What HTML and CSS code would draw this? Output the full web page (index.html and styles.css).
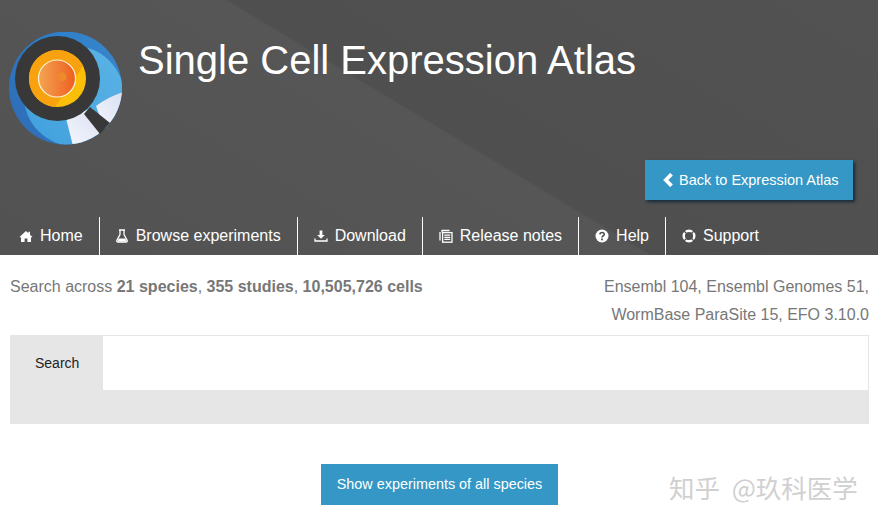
FILE: index.html
```html
<!DOCTYPE html>
<html lang="en">
<head>
<meta charset="utf-8">
<title>Single Cell Expression Atlas</title>
<link rel="stylesheet" href="styles.css">
</head>
<body>
<header class="masthead">
  <div class="brand">
    <svg class="logo" width="113" height="113" viewBox="9 32 113 113" aria-hidden="true">
      <defs>
        <clipPath id="disc"><circle cx="65.5" cy="88" r="56.5"/></clipPath>
        <linearGradient id="rim" x1="0" y1="0.6" x2="1" y2="0.1"><stop offset="0" stop-color="#2f6fb8"/><stop offset="0.5" stop-color="#2c7fcc"/><stop offset="1" stop-color="#3a86c8"/></linearGradient>
        <linearGradient id="sky" x1="0" y1="1" x2="1" y2="0"><stop offset="0" stop-color="#3f9fdc"/><stop offset="1" stop-color="#5db4e6"/></linearGradient>
        <linearGradient id="pale" x1="0" y1="1" x2="1" y2="0"><stop offset="0" stop-color="#f4f6fc"/><stop offset="1" stop-color="#d9dff2"/></linearGradient>
        <linearGradient id="core" x1="0" y1="0" x2="1" y2="0"><stop offset="0" stop-color="#f3a552"/><stop offset="1" stop-color="#ee5e20"/></linearGradient>
      </defs>
      <g clip-path="url(#disc)">
        <rect x="9" y="32" width="113" height="113" fill="url(#rim)"/>
        <circle cx="74" cy="96" r="50" fill="url(#sky)"/>
        <path d="M96 106 Q110 96 124 92 L124 128 L104 128 Z" fill="url(#pale)"/>
        <path d="M66 118 L73 146 L106 138 L92 108 Z" fill="url(#pale)"/>
      </g>
      <path d="M90 107 L110 123 L100 134 L84 114 Z" fill="#383838"/>
      <circle cx="57.5" cy="78.5" r="42.5" fill="#383838"/>
      <circle cx="57.5" cy="78.5" r="28.5" fill="#fbbf0a"/>
      <path d="M83 66 A28.5 28.5 0 1 0 55 107 Z" fill="#f7a20e"/>
      <circle cx="57" cy="78.5" r="18.5" fill="url(#core)" stroke="#fdf2d8" stroke-width="1.2"/>
      <circle cx="62" cy="77" r="4.5" fill="#ec8a2e"/>
    </svg>
    <h1 class="brand-title">Single Cell Expression Atlas</h1>
  </div>
  <div class="back-row">
    <a class="back-button" href="#">
      <svg class="chev" width="11" height="14" viewBox="0 0 11 14" aria-hidden="true"><path d="M8.5 1.2 L2.8 7 L8.5 12.8" fill="none" stroke="#fff" stroke-width="3.8"/></svg>
      Back to Expression Atlas
    </a>
  </div>
  <nav class="nav">
    <a class="nav-item nav-item-first" href="#">
      <svg class="nav-icon" width="14" height="14" viewBox="0 0 14 14" aria-hidden="true"><path d="M7 2 L0.5 8 L2 8.6 L2 13 L5.6 13 L5.6 9.4 L8.4 9.4 L8.4 13 L12 13 L12 8.6 L13.5 8 L11 5.7 L11 2.8 L9.4 2.8 L9.4 4.3 Z" fill="#fff"/></svg>
      Home
    </a>
    <a class="nav-item nav-item-tight" href="#">
      <svg class="nav-icon" width="14" height="14" viewBox="0 0 14 14" aria-hidden="true"><path d="M4 1 H10 M5 1.5 V5.5 L1.8 11.5 Q1.4 13 3 13 H11 Q12.6 13 12.2 11.5 L9 5.5 V1.5" fill="none" stroke="#fff" stroke-width="1.3"/><path d="M3.6 9.5 H10.4 L11.5 12.5 H2.5 Z" fill="#fff"/></svg>
      Browse experiments
    </a>
    <a class="nav-item" href="#">
      <svg class="nav-icon" width="14" height="14" viewBox="0 0 14 14" aria-hidden="true"><path d="M5.6 1.5 H8.4 V6 H10.8 L7 9.8 L3.2 6 H5.6 Z" fill="#fff"/><path d="M1 9.5 V12 H13 V9.5" fill="none" stroke="#fff" stroke-width="1.3"/></svg>
      Download
    </a>
    <a class="nav-item" href="#">
      <svg class="nav-icon" width="14" height="14" viewBox="0 0 14 14" aria-hidden="true"><path d="M3 3.5 V1.5 H10.5 M1 3 V11.5" fill="none" stroke="#fff" stroke-width="1.3"/><rect x="3.6" y="3.6" width="9.4" height="9.6" fill="none" stroke="#fff" stroke-width="1.3"/><path d="M5.3 6.2 H11.2 M5.3 8.3 H11.2 M5.3 10.4 H11.2" stroke="#fff" stroke-width="1.2"/></svg>
      Release notes
    </a>
    <a class="nav-item" href="#">
      <svg class="nav-icon" width="14" height="14" viewBox="0 0 14 14" aria-hidden="true"><circle cx="7" cy="7" r="6.5" fill="#fff"/><path d="M4.9 5.4 Q5 3.5 7 3.5 Q9.2 3.5 9.2 5.3 Q9.2 6.4 8 7 Q7 7.5 7 8.6" fill="none" stroke="#505050" stroke-width="1.6"/><rect x="6.1" y="9.5" width="1.8" height="1.8" fill="#505050"/></svg>
      Help
    </a>
    <a class="nav-item" href="#">
      <svg class="nav-icon" width="14" height="14" viewBox="0 0 14 14" aria-hidden="true"><circle cx="7" cy="7" r="5.3" fill="none" stroke="#fff" stroke-width="2.4"/><path d="M1.5 1.5 L5 5 M12.5 1.5 L9 5 M1.5 12.5 L5 9 M12.5 12.5 L9 9" stroke="#505050" stroke-width="1.2"/></svg>
      Support
    </a>
  </nav>
</header>
<main class="content">
  <div class="summary">
    <p class="summary-left">Search across <b>21 species</b>, <b>355 studies</b>, <b>10,505,726 cells</b></p>
    <p class="summary-right">Ensembl 104, Ensembl Genomes 51,<br>WormBase ParaSite 15, EFO 3.10.0</p>
  </div>
  <section class="search-panel">
    <div class="search-row">
      <label class="search-label" for="q">Search</label>
      <input class="search-input" id="q" type="text">
    </div>
  </section>
  <div class="actions">
    <a class="show-all" href="#">Show experiments of all species</a>
  </div>
</main>
<div class="watermark">知乎 @玖科医学</div>
</body>
</html>
```

FILE: styles.css
```css
* { box-sizing: border-box; }
html, body { margin: 0; padding: 0; }
body {
  position: relative;
  height: 523px;
  overflow: hidden;
  background: #fff;
  font-family: "Liberation Sans", Arial, sans-serif;
  color: #777;
}
a { text-decoration: none; }

.masthead {
  height: 255px;
  display: flex;
  flex-direction: column;
  background: linear-gradient(31deg, #525252 0, #565656 334px, #4f4f4f 336px, #525252 100%);
}
.brand {
  height: 160px;
  display: flex;
  align-items: flex-start;
  padding: 32px 0 0 9px;
}
.logo { flex: none; }
.brand-title {
  margin: 5px 0 0 16px;
  font-size: 40px;
  line-height: 46px;
  font-weight: 400;
  color: #fff;
}
.back-row {
  display: flex;
  justify-content: flex-end;
  padding-right: 25px;
}
.back-button {
  width: 208px;
  height: 40px;
  display: flex;
  align-items: center;
  gap: 5px;
  padding-left: 18px;
  background: #3497c5;
  color: #fff;
  font-size: 14.5px;
  box-shadow: 2px 2px 3px #15293a;
}
.nav {
  margin-top: 17px;
  height: 38px;
  display: flex;
}
.nav-item {
  display: flex;
  align-items: center;
  gap: 7px;
  height: 38px;
  padding: 0 16px;
  border-right: 1px solid #fff;
  color: #fff;
  font-size: 16px;
}
.nav-item-first { padding-left: 19px; }
.nav-item-tight { padding-left: 15px; }
.nav-item:last-child { border-right: 0; }
.nav-icon { flex: none; }

.content { padding: 0 9px 0 10px; }
.summary {
  display: flex;
  justify-content: space-between;
  height: 80px;
  padding-top: 18px;
  font-size: 16px;
  line-height: 28px;
}
.summary p { margin: 0; }
.summary-right { text-align: right; }
.search-panel {
  height: 89px;
  background: #e6e6e6;
  border-top: 1px solid #e6e6e6;
  padding-right: 1px;
}
.search-row { display: flex; height: 54px; }
.search-label {
  width: 93px;
  padding-left: 25px;
  line-height: 54px;
  font-size: 14px;
  color: #222;
}
.search-input {
  flex: 1;
  min-width: 0;
  border: 0;
  background: #fff;
}
.actions {
  display: flex;
  justify-content: center;
  padding-top: 40px;
}
.show-all {
  width: 237px;
  height: 41px;
  line-height: 41px;
  text-align: center;
  background: #3497c5;
  color: #fff;
  font-size: 14.4px;
}
.watermark {
  position: absolute;
  left: 669px;
  top: 469px;
  font-family: "Noto Sans CJK SC", sans-serif;
  font-size: 25.5px;
  line-height: 36px;
  word-spacing: 6px;
  color: #d0d0d0;
  white-space: nowrap;
}
```
